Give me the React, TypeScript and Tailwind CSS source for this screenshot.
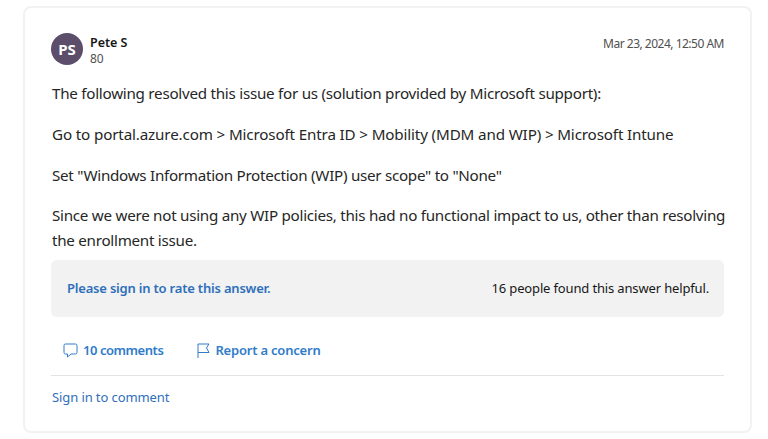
export default function App() {
  return (
    <div className="w-[768px] h-[439px] bg-white overflow-hidden pt-[6px] pl-[23px] font-['Noto_Sans',sans-serif] text-[#171717]">
      <div className="w-[729px] h-[427px] rounded-lg border-2 border-[#f2f2f2] pt-[24px] px-[26px]">
        <div className="flex justify-between">
          <div className="flex gap-[7px]">
            <div className="w-8 h-8 mt-[1px] rounded-full bg-[#5c4d6b] text-white text-[15px] font-bold flex items-center justify-center">PS</div>
            <div className="mt-[2px]">
              <div className="text-[12.5px] leading-[17px] font-semibold tracking-[-0.05px]">Pete S</div>
              <div className="text-[12px] leading-[16px] text-[#505050]">80</div>
            </div>
          </div>
          <div className="mt-[3px] text-[12px] leading-[18px] text-[#505050] tracking-[-0.5px]">Mar 23, 2024, 12:50 AM</div>
        </div>
        <div className="mt-[14px] pl-px text-[15.2px] leading-[25px] text-[#262626]">
          <p className="whitespace-nowrap tracking-[-0.26px]">The following resolved this issue for us (solution provided by Microsoft support):</p>
          <p className="mt-[16px] whitespace-nowrap tracking-[-0.145px]">Go to portal.azure.com &gt; Microsoft Entra ID &gt; Mobility (MDM and WIP) &gt; Microsoft Intune</p>
          <p className="mt-[16px] whitespace-nowrap tracking-[-0.28px]">Set "Windows Information Protection (WIP) user scope" to "None"</p>
          <p className="mt-[15px] whitespace-nowrap tracking-[-0.27px]">Since we were not using any WIP policies, this had no functional impact to us, other than resolving<br />the enrollment issue.</p>
        </div>
        <div className="mt-[7px] h-[57px] rounded-md bg-[#f2f2f2] flex items-center justify-between pl-4 pr-[15px] text-[13px] tracking-[-0.2px]">
          <span className="font-semibold text-[#2f6fba]">Please sign in to rate this answer.</span>
          <span className="tracking-[-0.15px]">16 people found this answer helpful.</span>
        </div>
        <div className="mt-[23px] pl-3 flex items-center gap-[34px] text-[13px] leading-[20px] font-semibold tracking-[-0.2px] text-[#2f7cc9]">
          <span className="flex items-center gap-[5px] tracking-[-0.45px]">
            <svg width="15" height="15" viewBox="0 0 15 15" fill="none" stroke="#2f7cc9" strokeWidth="1"><path d="M2.5 1h10a1.5 1.5 0 0 1 1.5 1.5v7a1.5 1.5 0 0 1-1.5 1.5H8l-3.500 3v-3h-2A1.500 1.500 0 0 1 1 9.500v-7A1.500 1.500 0 0 1 2.500 1z" /></svg>
            10 comments
          </span>
          <span className="flex items-center gap-[5px]">
            <svg width="13" height="15" viewBox="0 0 13 15" fill="none" stroke="#2f7cc9" strokeWidth="1"><path d="M1 15V1h11l-2.500 4L12 9.500H1" /></svg>
            Report a concern
          </span>
        </div>
        <div className="mt-[15px] border-t border-[#e3e3e3] pt-[11px] pl-px text-[13px] leading-[20px] tracking-[-0.1px] text-[#2f6fba]">Sign in to comment</div>
      </div>
    </div>
  );
}
